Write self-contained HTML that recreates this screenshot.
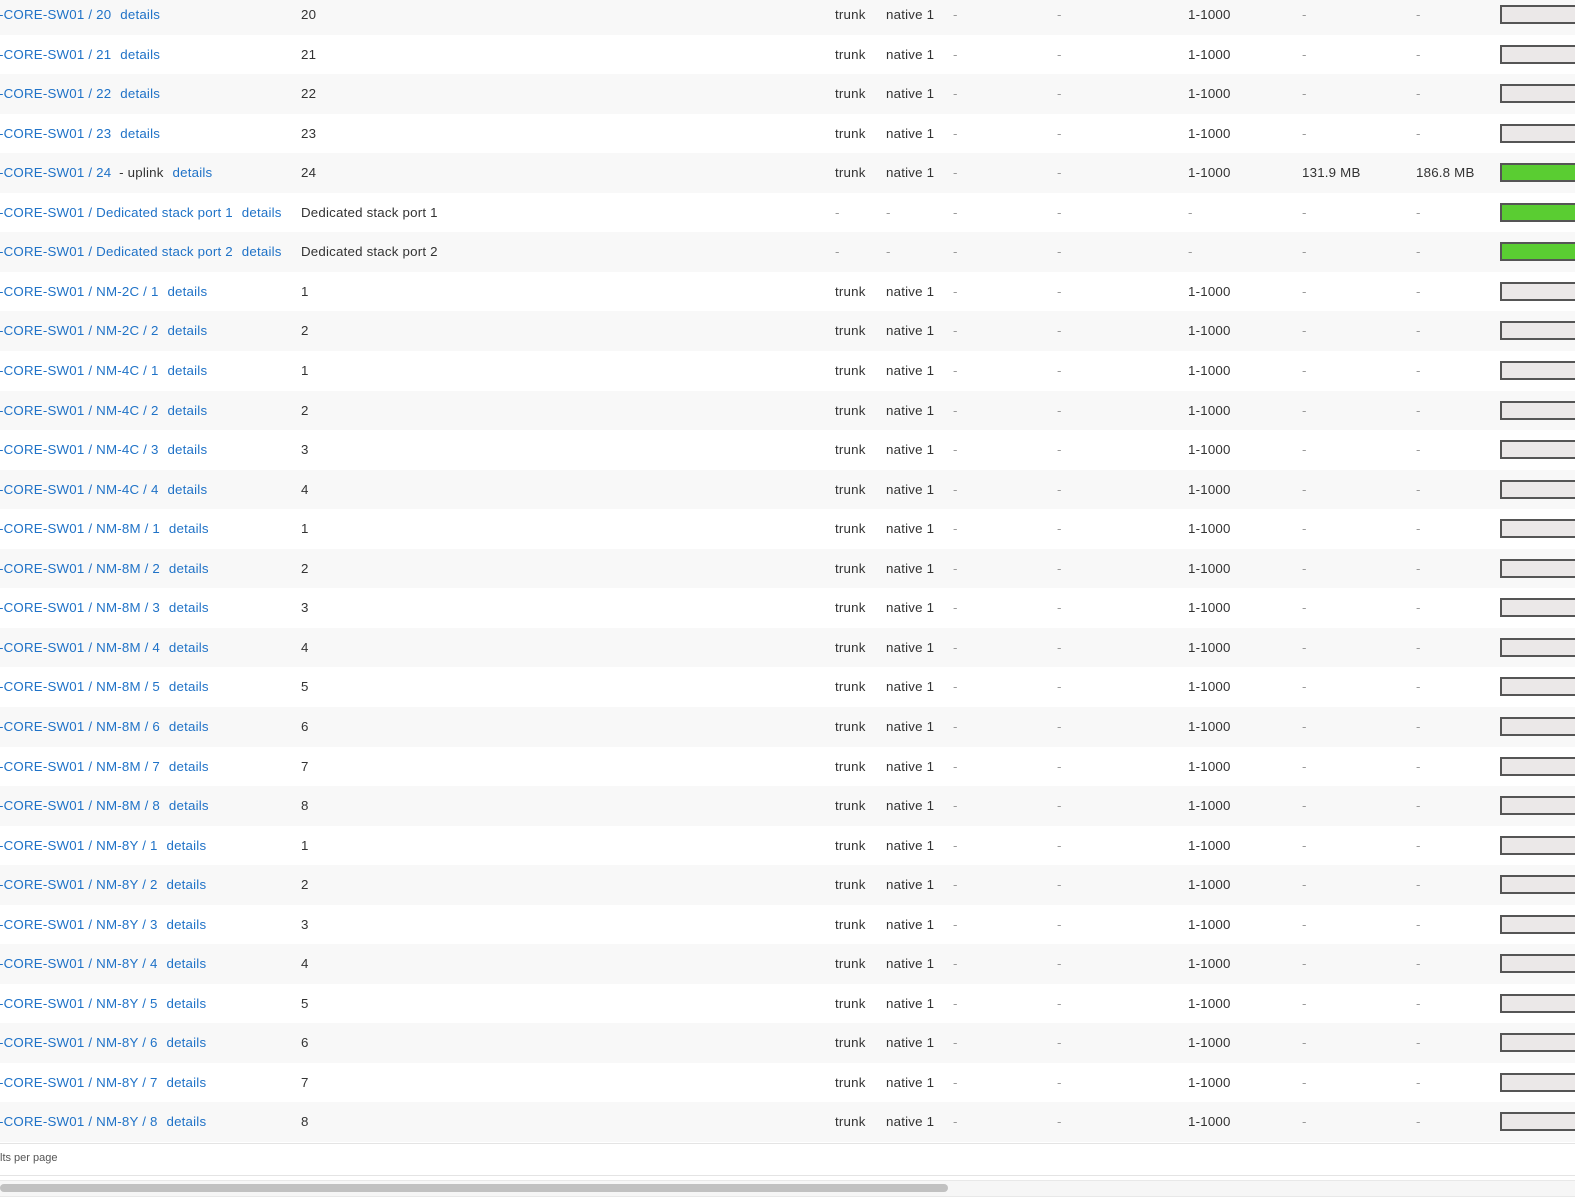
<!DOCTYPE html>
<html><head><meta charset="utf-8"><style>
body{margin:0;width:1575px;height:1197px;overflow:hidden;background:#fff;font-family:"Liberation Sans",sans-serif;font-size:13.3px;letter-spacing:0.2px;color:#333;position:relative}
#t{position:absolute;left:0;top:-4.9px;width:1575px}
.r{position:relative;height:39.56px;line-height:39.56px;white-space:nowrap}
.r:nth-child(odd){background:#f8f8f8}
.r span{position:absolute;top:0}
.n{left:-1px;color:#1f72c7}
.n i{font-style:normal;color:#333}
.n b{font-weight:normal;margin-left:5px}
.c1{left:301px}.c2{left:835px}.c3{left:886px}.c4{left:953px}.c5{left:1057px}.c6{left:1188px}.c7{left:1302px}.c8{left:1416px}
.d{color:#999}
.r em{position:absolute;left:1500px;top:10px;width:90px;height:15px;border:2px solid #555;background:#ebe8e8}
.r em.g{background:#5acd32}
#f{position:absolute;left:0;top:1143px;width:1575px;height:31px;border-top:1px solid #e4e4e4;border-bottom:1px solid #e4e4e4;font-size:11px;color:#555;line-height:28px;letter-spacing:0}
#s{position:absolute;left:0;top:1180px;width:1575px;height:15px;background:#f6f6f6;border-top:1px solid #e8e8e8;border-bottom:1px solid #e8e8e8}
#s div{position:absolute;left:0;top:3px;width:948px;height:8px;border-radius:4px;background:#c1c1c1}
</style></head><body><div id="t">
<div class="r"><span class="n">-CORE-SW01 / 20 <b>details</b></span><span class="c1">20</span><span class="c2">trunk</span><span class="c3">native 1</span><span class="c4 d">-</span><span class="c5 d">-</span><span class="c6">1-1000</span><span class="c7 d">-</span><span class="c8 d">-</span><em></em></div>
<div class="r"><span class="n">-CORE-SW01 / 21 <b>details</b></span><span class="c1">21</span><span class="c2">trunk</span><span class="c3">native 1</span><span class="c4 d">-</span><span class="c5 d">-</span><span class="c6">1-1000</span><span class="c7 d">-</span><span class="c8 d">-</span><em></em></div>
<div class="r"><span class="n">-CORE-SW01 / 22 <b>details</b></span><span class="c1">22</span><span class="c2">trunk</span><span class="c3">native 1</span><span class="c4 d">-</span><span class="c5 d">-</span><span class="c6">1-1000</span><span class="c7 d">-</span><span class="c8 d">-</span><em></em></div>
<div class="r"><span class="n">-CORE-SW01 / 23 <b>details</b></span><span class="c1">23</span><span class="c2">trunk</span><span class="c3">native 1</span><span class="c4 d">-</span><span class="c5 d">-</span><span class="c6">1-1000</span><span class="c7 d">-</span><span class="c8 d">-</span><em></em></div>
<div class="r"><span class="n">-CORE-SW01 / 24 &nbsp;<i>- uplink</i> <b>details</b></span><span class="c1">24</span><span class="c2">trunk</span><span class="c3">native 1</span><span class="c4 d">-</span><span class="c5 d">-</span><span class="c6">1-1000</span><span class="c7">131.9 MB</span><span class="c8">186.8 MB</span><em class="g"></em></div>
<div class="r"><span class="n">-CORE-SW01 / Dedicated stack port 1 <b>details</b></span><span class="c1">Dedicated stack port 1</span><span class="c2 d">-</span><span class="c3 d">-</span><span class="c4 d">-</span><span class="c5 d">-</span><span class="c6 d">-</span><span class="c7 d">-</span><span class="c8 d">-</span><em class="g"></em></div>
<div class="r"><span class="n">-CORE-SW01 / Dedicated stack port 2 <b>details</b></span><span class="c1">Dedicated stack port 2</span><span class="c2 d">-</span><span class="c3 d">-</span><span class="c4 d">-</span><span class="c5 d">-</span><span class="c6 d">-</span><span class="c7 d">-</span><span class="c8 d">-</span><em class="g"></em></div>
<div class="r"><span class="n">-CORE-SW01 / NM-2C / 1 <b>details</b></span><span class="c1">1</span><span class="c2">trunk</span><span class="c3">native 1</span><span class="c4 d">-</span><span class="c5 d">-</span><span class="c6">1-1000</span><span class="c7 d">-</span><span class="c8 d">-</span><em></em></div>
<div class="r"><span class="n">-CORE-SW01 / NM-2C / 2 <b>details</b></span><span class="c1">2</span><span class="c2">trunk</span><span class="c3">native 1</span><span class="c4 d">-</span><span class="c5 d">-</span><span class="c6">1-1000</span><span class="c7 d">-</span><span class="c8 d">-</span><em></em></div>
<div class="r"><span class="n">-CORE-SW01 / NM-4C / 1 <b>details</b></span><span class="c1">1</span><span class="c2">trunk</span><span class="c3">native 1</span><span class="c4 d">-</span><span class="c5 d">-</span><span class="c6">1-1000</span><span class="c7 d">-</span><span class="c8 d">-</span><em></em></div>
<div class="r"><span class="n">-CORE-SW01 / NM-4C / 2 <b>details</b></span><span class="c1">2</span><span class="c2">trunk</span><span class="c3">native 1</span><span class="c4 d">-</span><span class="c5 d">-</span><span class="c6">1-1000</span><span class="c7 d">-</span><span class="c8 d">-</span><em></em></div>
<div class="r"><span class="n">-CORE-SW01 / NM-4C / 3 <b>details</b></span><span class="c1">3</span><span class="c2">trunk</span><span class="c3">native 1</span><span class="c4 d">-</span><span class="c5 d">-</span><span class="c6">1-1000</span><span class="c7 d">-</span><span class="c8 d">-</span><em></em></div>
<div class="r"><span class="n">-CORE-SW01 / NM-4C / 4 <b>details</b></span><span class="c1">4</span><span class="c2">trunk</span><span class="c3">native 1</span><span class="c4 d">-</span><span class="c5 d">-</span><span class="c6">1-1000</span><span class="c7 d">-</span><span class="c8 d">-</span><em></em></div>
<div class="r"><span class="n">-CORE-SW01 / NM-8M / 1 <b>details</b></span><span class="c1">1</span><span class="c2">trunk</span><span class="c3">native 1</span><span class="c4 d">-</span><span class="c5 d">-</span><span class="c6">1-1000</span><span class="c7 d">-</span><span class="c8 d">-</span><em></em></div>
<div class="r"><span class="n">-CORE-SW01 / NM-8M / 2 <b>details</b></span><span class="c1">2</span><span class="c2">trunk</span><span class="c3">native 1</span><span class="c4 d">-</span><span class="c5 d">-</span><span class="c6">1-1000</span><span class="c7 d">-</span><span class="c8 d">-</span><em></em></div>
<div class="r"><span class="n">-CORE-SW01 / NM-8M / 3 <b>details</b></span><span class="c1">3</span><span class="c2">trunk</span><span class="c3">native 1</span><span class="c4 d">-</span><span class="c5 d">-</span><span class="c6">1-1000</span><span class="c7 d">-</span><span class="c8 d">-</span><em></em></div>
<div class="r"><span class="n">-CORE-SW01 / NM-8M / 4 <b>details</b></span><span class="c1">4</span><span class="c2">trunk</span><span class="c3">native 1</span><span class="c4 d">-</span><span class="c5 d">-</span><span class="c6">1-1000</span><span class="c7 d">-</span><span class="c8 d">-</span><em></em></div>
<div class="r"><span class="n">-CORE-SW01 / NM-8M / 5 <b>details</b></span><span class="c1">5</span><span class="c2">trunk</span><span class="c3">native 1</span><span class="c4 d">-</span><span class="c5 d">-</span><span class="c6">1-1000</span><span class="c7 d">-</span><span class="c8 d">-</span><em></em></div>
<div class="r"><span class="n">-CORE-SW01 / NM-8M / 6 <b>details</b></span><span class="c1">6</span><span class="c2">trunk</span><span class="c3">native 1</span><span class="c4 d">-</span><span class="c5 d">-</span><span class="c6">1-1000</span><span class="c7 d">-</span><span class="c8 d">-</span><em></em></div>
<div class="r"><span class="n">-CORE-SW01 / NM-8M / 7 <b>details</b></span><span class="c1">7</span><span class="c2">trunk</span><span class="c3">native 1</span><span class="c4 d">-</span><span class="c5 d">-</span><span class="c6">1-1000</span><span class="c7 d">-</span><span class="c8 d">-</span><em></em></div>
<div class="r"><span class="n">-CORE-SW01 / NM-8M / 8 <b>details</b></span><span class="c1">8</span><span class="c2">trunk</span><span class="c3">native 1</span><span class="c4 d">-</span><span class="c5 d">-</span><span class="c6">1-1000</span><span class="c7 d">-</span><span class="c8 d">-</span><em></em></div>
<div class="r"><span class="n">-CORE-SW01 / NM-8Y / 1 <b>details</b></span><span class="c1">1</span><span class="c2">trunk</span><span class="c3">native 1</span><span class="c4 d">-</span><span class="c5 d">-</span><span class="c6">1-1000</span><span class="c7 d">-</span><span class="c8 d">-</span><em></em></div>
<div class="r"><span class="n">-CORE-SW01 / NM-8Y / 2 <b>details</b></span><span class="c1">2</span><span class="c2">trunk</span><span class="c3">native 1</span><span class="c4 d">-</span><span class="c5 d">-</span><span class="c6">1-1000</span><span class="c7 d">-</span><span class="c8 d">-</span><em></em></div>
<div class="r"><span class="n">-CORE-SW01 / NM-8Y / 3 <b>details</b></span><span class="c1">3</span><span class="c2">trunk</span><span class="c3">native 1</span><span class="c4 d">-</span><span class="c5 d">-</span><span class="c6">1-1000</span><span class="c7 d">-</span><span class="c8 d">-</span><em></em></div>
<div class="r"><span class="n">-CORE-SW01 / NM-8Y / 4 <b>details</b></span><span class="c1">4</span><span class="c2">trunk</span><span class="c3">native 1</span><span class="c4 d">-</span><span class="c5 d">-</span><span class="c6">1-1000</span><span class="c7 d">-</span><span class="c8 d">-</span><em></em></div>
<div class="r"><span class="n">-CORE-SW01 / NM-8Y / 5 <b>details</b></span><span class="c1">5</span><span class="c2">trunk</span><span class="c3">native 1</span><span class="c4 d">-</span><span class="c5 d">-</span><span class="c6">1-1000</span><span class="c7 d">-</span><span class="c8 d">-</span><em></em></div>
<div class="r"><span class="n">-CORE-SW01 / NM-8Y / 6 <b>details</b></span><span class="c1">6</span><span class="c2">trunk</span><span class="c3">native 1</span><span class="c4 d">-</span><span class="c5 d">-</span><span class="c6">1-1000</span><span class="c7 d">-</span><span class="c8 d">-</span><em></em></div>
<div class="r"><span class="n">-CORE-SW01 / NM-8Y / 7 <b>details</b></span><span class="c1">7</span><span class="c2">trunk</span><span class="c3">native 1</span><span class="c4 d">-</span><span class="c5 d">-</span><span class="c6">1-1000</span><span class="c7 d">-</span><span class="c8 d">-</span><em></em></div>
<div class="r"><span class="n">-CORE-SW01 / NM-8Y / 8 <b>details</b></span><span class="c1">8</span><span class="c2">trunk</span><span class="c3">native 1</span><span class="c4 d">-</span><span class="c5 d">-</span><span class="c6">1-1000</span><span class="c7 d">-</span><span class="c8 d">-</span><em></em></div>
</div>
<div id="f">lts per page</div>
<div id="s"><div></div></div>
</body></html>
